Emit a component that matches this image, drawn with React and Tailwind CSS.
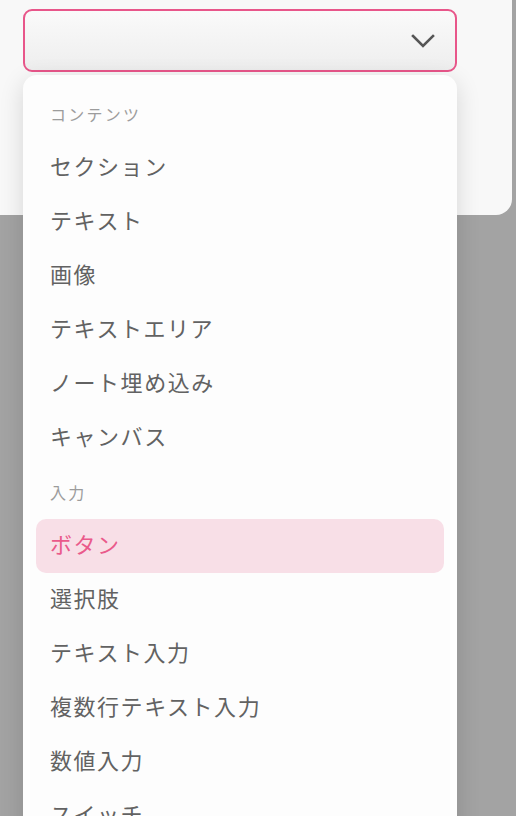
const groups = [
  { label: "コンテンツ", items: ["セクション", "テキスト", "画像", "テキストエリア", "ノート埋め込み", "キャンバス"] },
  { label: "入力", items: ["ボタン", "選択肢", "テキスト入力", "複数行テキスト入力", "数値入力", "スイッチ"] },
];

const selected = "ボタン";

export default function App() {
  return (
    <div
      className="relative w-[516px] h-[816px] overflow-hidden bg-[#a3a3a3]"
      style={{ fontFamily: '"Noto Sans CJK JP", "Noto Sans", sans-serif' }}
    >
      {/* Card behind */}
      <div className="w-[512px] h-[215px] bg-[#f8f8f8] rounded-br-[16px] pt-[9px] pl-[23px]">
        <div className="w-[434px] h-[63px] rounded-[9px] border-2 border-[#e8568a] bg-gradient-to-b from-[#fafafa] to-[#eeeeee] flex items-center justify-end pr-[20px]">
          <svg width="24" height="14" viewBox="0 0 24 14" fill="none">
            <path d="M2 2l10 10 10-10" stroke="#555" strokeWidth="2.6" strokeLinecap="square" />
          </svg>
        </div>
      </div>

      {/* Dropdown menu */}
      <div className="absolute left-[23px] top-[75px] w-[434px] h-[780px] bg-[#fdfdfd] rounded-[14px] shadow-[0_6px_24px_rgba(0,0,0,0.14)] pt-[12px] px-[13px]">
        {groups.map((g) => (
          <div key={g.label}>
            <div className="h-[54px] flex items-center px-[14px] text-[16px] tracking-[0.14em] text-[#9c9c9c]">{g.label}</div>
            {g.items.map((it) => (
              <div
                key={it}
                className={`h-[54px] flex items-center px-[14px] pb-[5px] text-[22px] tracking-[0.07em] rounded-[10px] ${
                  it === selected ? "bg-[#f8dfe7] text-[#ea5a8b]" : "text-[#626262]"
                }`}
              >
                {it}
              </div>
            ))}
          </div>
        ))}
      </div>
    </div>
  );
}
